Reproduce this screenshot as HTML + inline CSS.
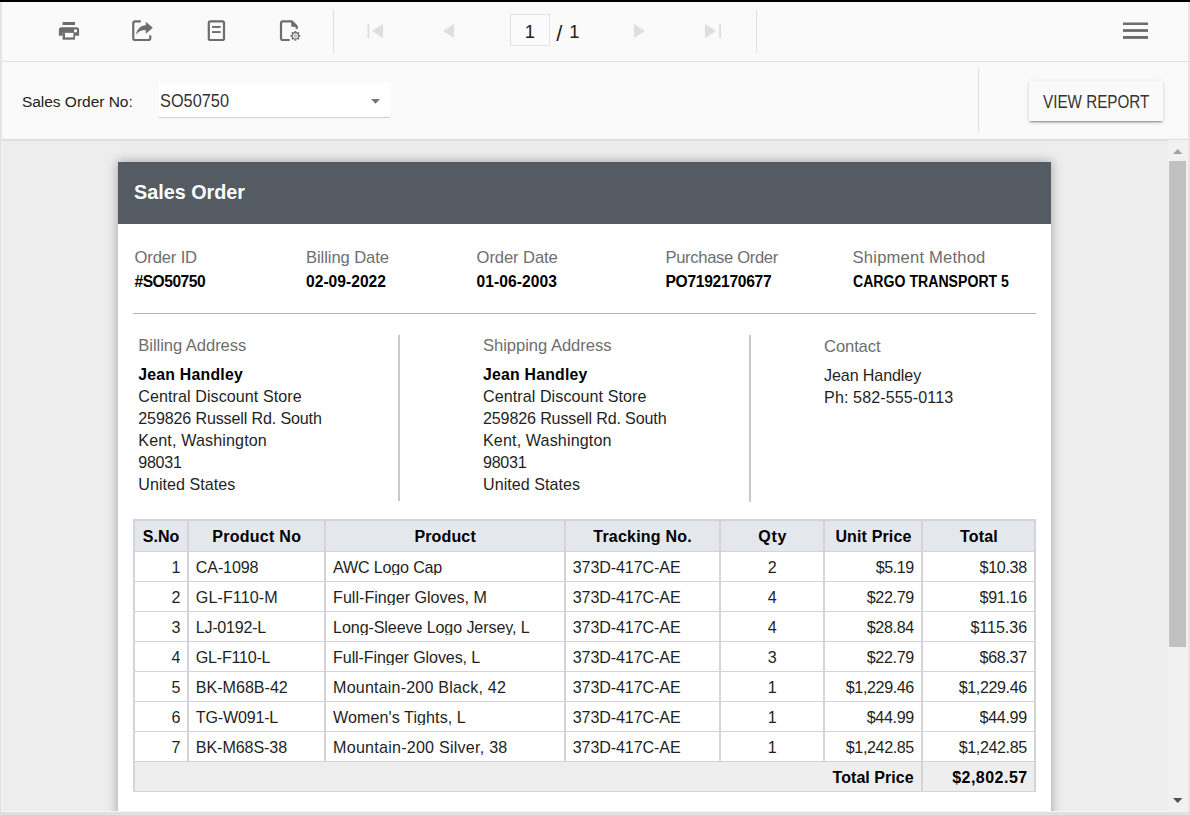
<!DOCTYPE html>
<html><head><meta charset="utf-8"><title>Sales Order</title>
<style>
html,body{margin:0;padding:0}
body{width:1190px;height:815px;position:relative;overflow:hidden;background:#fafafa;font-family:"Liberation Sans",sans-serif;}
.a{position:absolute}
.t{position:absolute;white-space:pre;line-height:1;transform-origin:0 0;font-family:"Liberation Sans",sans-serif;color:#000}
</style></head><body>
<!-- frame -->
<div class="a" style="left:0;top:0;width:1190px;height:2px;background:#000"></div>
<div class="a" style="left:0;top:2px;width:2px;height:813px;background:#e5e5e5"></div>
<div class="a" style="left:1188px;top:2px;width:2px;height:813px;background:#e6e6e6"></div>
<!-- toolbar -->
<div class="a" style="left:2px;top:61px;width:1186px;height:1px;background:#e0e0e0"></div>
<div class="a" style="left:333px;top:10px;width:1px;height:43px;background:#e0e0e0"></div>
<div class="a" style="left:756px;top:10px;width:1px;height:43px;background:#e0e0e0"></div>
<div class="a" style="left:510px;top:14px;width:38px;height:30px;border:1px solid #e3e3e3;background:#fbfbfb"></div>
<svg class="a" style="left:0;top:0" width="1190" height="62" viewBox="0 0 1190 62">
<!-- print -->
<g fill="#6c6c6c">
<rect x="62.600" y="22" width="12.400" height="3"/>
<path d="M61.400 27.200h15.200a2.500 2.500 0 0 1 2.500 2.500V35.800h-4.100v-3H62.600v3h-3.700v-6.100a2.500 2.500 0 0 1 2.500-2.500z"/>
<path d="M62.600 32.500h12.400v7.200H62.600z"/>
</g>
<rect x="65" y="33" width="8.400" height="4.400" fill="#fcfcfc"/>
<rect x="74" y="29.500" width="3" height="2.700" fill="#fafafa"/>
<!-- export -->
<path d="M140.800 21.350h-5.850a1.700 1.700 0 0 0-1.700 1.700v15.250a1.700 1.700 0 0 0 1.700 1.700h13.600a1.700 1.700 0 0 0 1.700-1.700v-3.100" fill="none" stroke="#6c6c6c" stroke-width="2.200"/>
<path d="M152.800 27.700l-7-5.900v3.500c-5.100.3-8.800 3.600-9.800 9.300 2.500-3.200 5.500-4.500 9.800-4.500v3.700z" fill="#6c6c6c"/>
<!-- page -->
<rect x="208.800" y="21.400" width="15.200" height="18.600" rx="1.600" fill="none" stroke="#6c6c6c" stroke-width="2.200"/>
<rect x="212" y="26" width="8.600" height="1.900" fill="#6c6c6c"/>
<rect x="212" y="31.100" width="8.600" height="1.900" fill="#6c6c6c"/>
<!-- page setup -->
<path d="M289.700 40H283a2 2 0 0 1-2-2V23.350a2 2 0 0 1 2-2h8.800l4.900 4.900v2.700" fill="none" stroke="#6c6c6c" stroke-width="2.200"/>
<path d="M291.800 21.350l4.900 4.900h-4.900z" fill="#6c6c6c" stroke="#6c6c6c" stroke-width="1"/>
<g stroke="#6c6c6c" fill="none">
<circle cx="295.400" cy="35.800" r="3.200" stroke-width="1.200"/>
<circle cx="295.400" cy="35.800" r="1.100" stroke-width="0.900" stroke="#8a8a8a"/>
<g stroke-width="1.700">
<path d="M295.400 30.900v1.500M295.400 39.200v1.500M290.500 35.800h1.500M298.800 35.800h1.500M291.940 32.340l1.060 1.060M297.800 38.200l1.060 1.060M291.940 39.260l1.060-1.060M297.800 33.400l1.060-1.060"/>
</g></g>
<!-- nav (disabled) -->
<g fill="#dedede">
<rect x="367.500" y="24" width="1.800" height="14"/>
<path d="M383 24v14l-11-7z"/>
<path d="M454 24v14l-11-7z"/>
<path d="M634 24v14l11-7z"/>
<path d="M705 24v14l11-7z"/>
<rect x="719.200" y="24" width="1.800" height="14"/>
</g>
<!-- hamburger -->
<g fill="#6c6c6c">
<rect x="1123" y="22.500" width="25" height="2.500"/>
<rect x="1123" y="29.100" width="25" height="2.800"/>
<rect x="1123" y="36" width="25" height="2.900"/>
</g>
</svg>
<!-- params -->
<div class="a" style="left:159px;top:83px;width:231px;height:34px;background:#fff;border-bottom:1px solid #cfcfcf"></div>
<svg class="a" style="left:371px;top:98.600px" width="9" height="5" viewBox="0 0 9 5"><path d="M0 0h9l-4.500 4.800z" fill="#757575"/></svg>
<div class="a" style="left:978px;top:68px;width:1px;height:64px;background:#e0e0e0"></div>
<div class="a" style="left:1029px;top:81px;width:134px;height:40px;background:#fafafa;border-radius:2px;box-shadow:0 3px 1px -2px rgba(0,0,0,.2),0 2px 2px 0 rgba(0,0,0,.14),0 1px 5px 0 rgba(0,0,0,.12)"></div>
<!-- viewer area -->
<div class="a" style="left:2px;top:138px;width:1186px;height:1px;background:#f4f4f4"></div><div class="a" style="left:2px;top:139px;width:1186px;height:1px;background:#e0e0e0"></div><div class="a" style="left:2px;top:140px;width:1166px;height:1px;background:#dedede"></div>
<div class="a" style="left:3px;top:141px;width:1165px;height:671px;background:#ededed;overflow:hidden">
  <div class="a" style="left:115px;top:21px;width:933px;height:700px;background:#fff;box-shadow:0 0 10px 1px rgba(0,0,0,.28)"></div>
</div>
<div class="a" style="left:2px;top:141px;width:1px;height:671px;background:#fafafa"></div>
<!-- scrollbar -->
<div class="a" style="left:1168px;top:140px;width:20px;height:672px;background:#f1f1f1"></div>
<div class="a" style="left:1169px;top:161px;width:17px;height:486px;background:#c1c1c1"></div>
<svg class="a" style="left:1173px;top:148.800px" width="10" height="5" viewBox="0 0 10 5"><path d="M0 5h9.400l-4.700-5z" fill="#a3a3a3"/></svg>
<svg class="a" style="left:1173px;top:798.200px" width="10" height="5" viewBox="0 0 10 5"><path d="M0 0h9.400l-4.700 5z" fill="#505050"/></svg>
<div class="a" style="left:2px;top:811px;width:1186px;height:1px;background:#f6f6f6"></div>
<div class="a" style="left:0;top:812px;width:1190px;height:3px;background:#e0e0e0"></div>
<!-- report page content -->
<div class="a" style="left:118px;top:162px;width:933px;height:62px;background:#545b62"></div>
<div class="a" style="left:133px;top:313px;width:903px;height:1px;background:#b4b4b4"></div>
<div class="a" style="left:398px;top:335px;width:2px;height:166px;background:#c9c9c9"></div>
<div class="a" style="left:749px;top:335px;width:2px;height:167px;background:#c9c9c9"></div>
<!-- table -->
<div class="a" style="left:133px;top:519px;width:903px;height:273px;background:#d3d4d7"></div>
<div class="a" style="left:135px;top:521px;width:899px;height:30px;background:#e4e7ec"></div>
<div class="a" style="left:135px;top:552px;width:899px;height:209px;background:#fff"></div>
<div class="a" style="left:135px;top:762px;width:899px;height:29px;background:#eeeeee"></div>
<div class="a" style="left:135px;top:551px;width:899px;height:1px;background:#d3d4d7"></div>
<div class="a" style="left:135px;top:581px;width:899px;height:1px;background:#d3d4d7"></div>
<div class="a" style="left:135px;top:611px;width:899px;height:1px;background:#d3d4d7"></div>
<div class="a" style="left:135px;top:641px;width:899px;height:1px;background:#d3d4d7"></div>
<div class="a" style="left:135px;top:671px;width:899px;height:1px;background:#d3d4d7"></div>
<div class="a" style="left:135px;top:701px;width:899px;height:1px;background:#d3d4d7"></div>
<div class="a" style="left:135px;top:731px;width:899px;height:1px;background:#d3d4d7"></div>
<div class="a" style="left:135px;top:761px;width:899px;height:1px;background:#d3d4d7"></div>
<div class="a" style="left:187px;top:521px;width:2px;height:240px;background:#d3d4d7"></div>
<div class="a" style="left:324px;top:521px;width:2px;height:240px;background:#d3d4d7"></div>
<div class="a" style="left:564px;top:521px;width:2px;height:240px;background:#d3d4d7"></div>
<div class="a" style="left:719px;top:521px;width:2px;height:240px;background:#d3d4d7"></div>
<div class="a" style="left:823px;top:521px;width:2px;height:240px;background:#d3d4d7"></div>
<div class="a" style="left:921px;top:521px;width:2px;height:270px;background:#d3d4d7"></div>
<div class="t" style="left:524.80px;top:22.51px;font-size:18.3px;color:#222;">1</div>
<div class="t" style="left:556.20px;top:23.38px;font-size:22px;color:#222;">/</div>
<div class="t" style="left:569.20px;top:22.51px;font-size:18.3px;color:#222;">1</div>
<div class="t" style="left:21.90px;top:93.88px;font-size:15.5px;letter-spacing:-0.017px;color:#222;">Sales Order No:</div>
<div class="t" style="left:159.60px;top:91.76px;font-size:18px;transform:scaleX(0.9068);color:#333;">SO50750</div>
<div class="t" style="left:1042.90px;top:92.76px;font-size:18px;transform:scaleX(0.846);color:#333;">VIEW REPORT</div>
<div class="t" style="left:133.60px;top:181.22px;font-size:21px;transform:scaleX(0.9416);font-weight:700;color:#fff;">Sales Order</div>
<div class="t" style="left:134.50px;top:249.95px;font-size:16.6px;letter-spacing:-0.146px;color:#6e6e6e;">Order ID</div>
<div class="t" style="left:306.00px;top:249.95px;font-size:16.6px;letter-spacing:-0.085px;color:#6e6e6e;">Billing Date</div>
<div class="t" style="left:476.60px;top:249.95px;font-size:16.6px;letter-spacing:-0.098px;color:#6e6e6e;">Order Date</div>
<div class="t" style="left:665.50px;top:249.95px;font-size:16.6px;letter-spacing:-0.342px;color:#6e6e6e;">Purchase Order</div>
<div class="t" style="left:852.60px;top:249.95px;font-size:16.6px;letter-spacing:0.188px;color:#6e6e6e;">Shipment Method</div>
<div class="t" style="left:134.50px;top:273.79px;font-size:15.6px;letter-spacing:-0.497px;font-weight:700;">#SO50750</div>
<div class="t" style="left:306.00px;top:273.79px;font-size:15.6px;letter-spacing:0.024px;font-weight:700;">02-09-2022</div>
<div class="t" style="left:476.60px;top:273.79px;font-size:15.6px;letter-spacing:0.069px;font-weight:700;">01-06-2003</div>
<div class="t" style="left:665.50px;top:273.79px;font-size:15.6px;letter-spacing:-0.288px;font-weight:700;">PO7192170677</div>
<div class="t" style="left:852.60px;top:273.79px;font-size:15.6px;transform:scaleX(0.9046);font-weight:700;">CARGO TRANSPORT 5</div>
<div class="t" style="left:138.30px;top:337.95px;font-size:16.6px;letter-spacing:-0.06px;color:#6e6e6e;">Billing Address</div>
<div class="t" style="left:138.30px;top:366.63px;font-size:15.8px;letter-spacing:0.231px;font-weight:700;">Jean Handley</div>
<div class="t" style="left:138.30px;top:388.37px;font-size:16.1px;letter-spacing:0.071px;color:#1f1f1f;">Central Discount Store</div>
<div class="t" style="left:138.30px;top:410.37px;font-size:16.1px;letter-spacing:-0.148px;color:#1f1f1f;">259826 Russell Rd. South</div>
<div class="t" style="left:138.30px;top:432.37px;font-size:16.1px;letter-spacing:0.136px;color:#1f1f1f;">Kent, Washington</div>
<div class="t" style="left:138.30px;top:454.37px;font-size:16.1px;letter-spacing:-0.291px;color:#1f1f1f;">98031</div>
<div class="t" style="left:138.30px;top:476.37px;font-size:16.1px;letter-spacing:0.031px;color:#1f1f1f;">United States</div>
<div class="t" style="left:483.00px;top:337.95px;font-size:16.6px;letter-spacing:-0.044px;color:#6e6e6e;">Shipping Address</div>
<div class="t" style="left:483.00px;top:366.63px;font-size:15.8px;letter-spacing:0.231px;font-weight:700;">Jean Handley</div>
<div class="t" style="left:483.00px;top:388.37px;font-size:16.1px;letter-spacing:0.071px;color:#1f1f1f;">Central Discount Store</div>
<div class="t" style="left:483.00px;top:410.37px;font-size:16.1px;letter-spacing:-0.148px;color:#1f1f1f;">259826 Russell Rd. South</div>
<div class="t" style="left:483.00px;top:432.37px;font-size:16.1px;letter-spacing:0.136px;color:#1f1f1f;">Kent, Washington</div>
<div class="t" style="left:483.00px;top:454.37px;font-size:16.1px;letter-spacing:-0.291px;color:#1f1f1f;">98031</div>
<div class="t" style="left:483.00px;top:476.37px;font-size:16.1px;letter-spacing:0.031px;color:#1f1f1f;">United States</div>
<div class="t" style="left:824.10px;top:338.95px;font-size:16.6px;letter-spacing:-0.131px;color:#6e6e6e;">Contact</div>
<div class="t" style="left:824.10px;top:367.37px;font-size:16.1px;letter-spacing:-0.12px;color:#1f1f1f;">Jean Handley</div>
<div class="t" style="left:824.10px;top:389.37px;font-size:16.1px;letter-spacing:0.095px;color:#1f1f1f;">Ph: 582-555-0113</div>
<div class="t" style="left:142.70px;top:529.46px;font-size:16px;letter-spacing:0.049px;font-weight:700;">S.No</div>
<div class="t" style="left:212.25px;top:529.46px;font-size:16px;letter-spacing:0.276px;font-weight:700;">Product No</div>
<div class="t" style="left:414.45px;top:529.46px;font-size:16px;letter-spacing:0.141px;font-weight:700;">Product</div>
<div class="t" style="left:593.35px;top:529.46px;font-size:16px;letter-spacing:0.206px;font-weight:700;">Tracking No.</div>
<div class="t" style="left:758.20px;top:529.46px;font-size:16px;letter-spacing:0.764px;font-weight:700;">Qty</div>
<div class="t" style="left:835.40px;top:529.46px;font-size:16px;letter-spacing:0.146px;font-weight:700;">Unit Price</div>
<div class="t" style="left:959.90px;top:529.46px;font-size:16px;letter-spacing:0.192px;font-weight:700;">Total</div>
<div class="t" style="left:171.45px;top:559.37px;font-size:16.1px;color:#1f1f1f;height:15.63px;overflow:hidden;">1</div>
<div class="t" style="left:195.80px;top:559.37px;font-size:16.1px;letter-spacing:-0.139px;color:#1f1f1f;height:15.63px;overflow:hidden;">CA-1098</div>
<div class="t" style="left:333.10px;top:559.37px;font-size:16.1px;letter-spacing:-0.184px;color:#1f1f1f;height:15.63px;overflow:hidden;">AWC Logo Cap</div>
<div class="t" style="left:572.70px;top:559.37px;font-size:16.1px;letter-spacing:-0.104px;color:#1f1f1f;height:15.63px;overflow:hidden;">373D-417C-AE</div>
<div class="t" style="left:767.82px;top:559.37px;font-size:16.1px;color:#1f1f1f;height:15.63px;overflow:hidden;">2</div>
<div class="t" style="left:875.80px;top:559.37px;font-size:16.1px;letter-spacing:-0.445px;color:#1f1f1f;height:15.63px;overflow:hidden;">$5.19</div>
<div class="t" style="left:979.60px;top:559.37px;font-size:16.1px;letter-spacing:-0.327px;color:#1f1f1f;height:15.63px;overflow:hidden;">$10.38</div>
<div class="t" style="left:171.45px;top:589.37px;font-size:16.1px;color:#1f1f1f;height:15.63px;overflow:hidden;">2</div>
<div class="t" style="left:195.80px;top:589.37px;font-size:16.1px;letter-spacing:0.101px;color:#1f1f1f;height:15.63px;overflow:hidden;">GL-F110-M</div>
<div class="t" style="left:333.10px;top:589.37px;font-size:16.1px;letter-spacing:-0.001px;color:#1f1f1f;height:15.63px;overflow:hidden;">Full-Finger Gloves, M</div>
<div class="t" style="left:572.70px;top:589.37px;font-size:16.1px;letter-spacing:-0.104px;color:#1f1f1f;height:15.63px;overflow:hidden;">373D-417C-AE</div>
<div class="t" style="left:767.82px;top:589.37px;font-size:16.1px;color:#1f1f1f;height:15.63px;overflow:hidden;">4</div>
<div class="t" style="left:866.70px;top:589.37px;font-size:16.1px;letter-spacing:-0.327px;color:#1f1f1f;height:15.63px;overflow:hidden;">$22.79</div>
<div class="t" style="left:979.60px;top:589.37px;font-size:16.1px;letter-spacing:-0.327px;color:#1f1f1f;height:15.63px;overflow:hidden;">$91.16</div>
<div class="t" style="left:171.45px;top:619.37px;font-size:16.1px;color:#1f1f1f;height:15.63px;overflow:hidden;">3</div>
<div class="t" style="left:195.80px;top:619.37px;font-size:16.1px;letter-spacing:-0.261px;color:#1f1f1f;height:15.63px;overflow:hidden;">LJ-0192-L</div>
<div class="t" style="left:333.10px;top:619.37px;font-size:16.1px;letter-spacing:-0.105px;color:#1f1f1f;height:15.63px;overflow:hidden;">Long-Sleeve Logo Jersey, L</div>
<div class="t" style="left:572.70px;top:619.37px;font-size:16.1px;letter-spacing:-0.104px;color:#1f1f1f;height:15.63px;overflow:hidden;">373D-417C-AE</div>
<div class="t" style="left:767.82px;top:619.37px;font-size:16.1px;color:#1f1f1f;height:15.63px;overflow:hidden;">4</div>
<div class="t" style="left:866.70px;top:619.37px;font-size:16.1px;letter-spacing:-0.327px;color:#1f1f1f;height:15.63px;overflow:hidden;">$28.84</div>
<div class="t" style="left:970.40px;top:619.37px;font-size:16.1px;letter-spacing:-0.031px;color:#1f1f1f;height:15.63px;overflow:hidden;">$115.36</div>
<div class="t" style="left:171.45px;top:649.37px;font-size:16.1px;color:#1f1f1f;height:15.63px;overflow:hidden;">4</div>
<div class="t" style="left:195.80px;top:649.37px;font-size:16.1px;letter-spacing:-0.243px;color:#1f1f1f;height:15.63px;overflow:hidden;">GL-F110-L</div>
<div class="t" style="left:333.10px;top:649.37px;font-size:16.1px;letter-spacing:-0.109px;color:#1f1f1f;height:15.63px;overflow:hidden;">Full-Finger Gloves, L</div>
<div class="t" style="left:572.70px;top:649.37px;font-size:16.1px;letter-spacing:-0.104px;color:#1f1f1f;height:15.63px;overflow:hidden;">373D-417C-AE</div>
<div class="t" style="left:767.82px;top:649.37px;font-size:16.1px;color:#1f1f1f;height:15.63px;overflow:hidden;">3</div>
<div class="t" style="left:866.70px;top:649.37px;font-size:16.1px;letter-spacing:-0.327px;color:#1f1f1f;height:15.63px;overflow:hidden;">$22.79</div>
<div class="t" style="left:979.60px;top:649.37px;font-size:16.1px;letter-spacing:-0.327px;color:#1f1f1f;height:15.63px;overflow:hidden;">$68.37</div>
<div class="t" style="left:171.45px;top:679.37px;font-size:16.1px;color:#1f1f1f;height:15.63px;overflow:hidden;">5</div>
<div class="t" style="left:195.80px;top:679.37px;font-size:16.1px;letter-spacing:-0.016px;color:#1f1f1f;height:15.63px;overflow:hidden;">BK-M68B-42</div>
<div class="t" style="left:333.10px;top:679.37px;font-size:16.1px;letter-spacing:0.176px;color:#1f1f1f;height:15.63px;overflow:hidden;">Mountain-200 Black, 42</div>
<div class="t" style="left:572.70px;top:679.37px;font-size:16.1px;letter-spacing:-0.104px;color:#1f1f1f;height:15.63px;overflow:hidden;">373D-417C-AE</div>
<div class="t" style="left:767.82px;top:679.37px;font-size:16.1px;color:#1f1f1f;height:15.63px;overflow:hidden;">1</div>
<div class="t" style="left:845.80px;top:679.37px;font-size:16.1px;letter-spacing:-0.389px;color:#1f1f1f;height:15.63px;overflow:hidden;">$1,229.46</div>
<div class="t" style="left:958.70px;top:679.37px;font-size:16.1px;letter-spacing:-0.389px;color:#1f1f1f;height:15.63px;overflow:hidden;">$1,229.46</div>
<div class="t" style="left:171.45px;top:709.37px;font-size:16.1px;color:#1f1f1f;height:15.63px;overflow:hidden;">6</div>
<div class="t" style="left:195.80px;top:709.37px;font-size:16.1px;letter-spacing:-0.195px;color:#1f1f1f;height:15.63px;overflow:hidden;">TG-W091-L</div>
<div class="t" style="left:333.10px;top:709.37px;font-size:16.1px;letter-spacing:0.069px;color:#1f1f1f;height:15.63px;overflow:hidden;">Women's Tights, L</div>
<div class="t" style="left:572.70px;top:709.37px;font-size:16.1px;letter-spacing:-0.104px;color:#1f1f1f;height:15.63px;overflow:hidden;">373D-417C-AE</div>
<div class="t" style="left:767.82px;top:709.37px;font-size:16.1px;color:#1f1f1f;height:15.63px;overflow:hidden;">1</div>
<div class="t" style="left:866.70px;top:709.37px;font-size:16.1px;letter-spacing:-0.327px;color:#1f1f1f;height:15.63px;overflow:hidden;">$44.99</div>
<div class="t" style="left:979.60px;top:709.37px;font-size:16.1px;letter-spacing:-0.327px;color:#1f1f1f;height:15.63px;overflow:hidden;">$44.99</div>
<div class="t" style="left:171.45px;top:739.37px;font-size:16.1px;color:#1f1f1f;height:15.63px;overflow:hidden;">7</div>
<div class="t" style="left:195.80px;top:739.37px;font-size:16.1px;letter-spacing:-0.082px;color:#1f1f1f;height:15.63px;overflow:hidden;">BK-M68S-38</div>
<div class="t" style="left:333.10px;top:739.37px;font-size:16.1px;letter-spacing:0.232px;color:#1f1f1f;height:15.63px;overflow:hidden;">Mountain-200 Silver, 38</div>
<div class="t" style="left:572.70px;top:739.37px;font-size:16.1px;letter-spacing:-0.104px;color:#1f1f1f;height:15.63px;overflow:hidden;">373D-417C-AE</div>
<div class="t" style="left:767.82px;top:739.37px;font-size:16.1px;color:#1f1f1f;height:15.63px;overflow:hidden;">1</div>
<div class="t" style="left:845.80px;top:739.37px;font-size:16.1px;letter-spacing:-0.389px;color:#1f1f1f;height:15.63px;overflow:hidden;">$1,242.85</div>
<div class="t" style="left:958.70px;top:739.37px;font-size:16.1px;letter-spacing:-0.389px;color:#1f1f1f;height:15.63px;overflow:hidden;">$1,242.85</div>
<div class="t" style="left:832.61px;top:770.46px;font-size:16px;letter-spacing:0.037px;font-weight:700;">Total Price</div>
<div class="t" style="left:952.20px;top:770.46px;font-size:16px;letter-spacing:0.477px;font-weight:700;">$2,802.57</div>
</body></html>
